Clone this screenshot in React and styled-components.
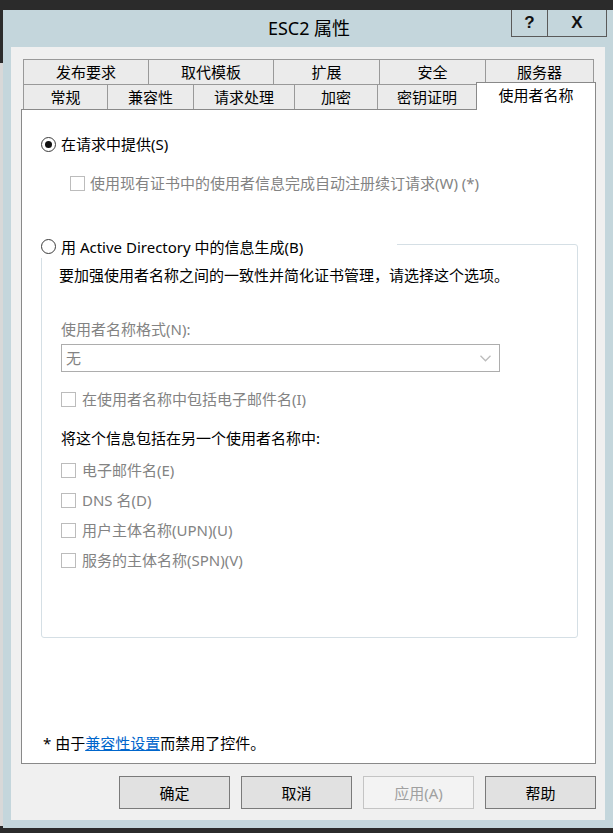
import React from 'react';
import styled, { createGlobalStyle, css } from 'styled-components';

const GlobalStyle = createGlobalStyle`
    html, body {
        margin: 0;
        padding: 0;
        background: #2b2b2b;
    }
    body {
        font-family: "Noto Sans", "Noto Sans CJK SC", sans-serif;
        font-size: 15px;
        color: #000;
    }
`;

const rowTabs = [
    { label: '发布要求', width: 126 },
    { label: '取代模板', width: 126 },
    { label: '扩展', width: 107 },
    { label: '安全', width: 107 },
    { label: '服务器', width: 109 },
];

const frontTabs = [
    { label: '常规', width: 85 },
    { label: '兼容性', width: 87 },
    { label: '请求处理', width: 102 },
    { label: '加密', width: 84 },
    { label: '密钥证明', width: 100 },
    { label: '使用者名称', width: 120, selected: true },
];

const nameChecks = [
    '电子邮件名(E)',
    'DNS 名(D)',
    '用户主体名称(UPN)(U)',
    '服务的主体名称(SPN)(V)',
];

const buttons = [
    { label: '确定' },
    { label: '取消' },
    { label: '应用(A)', disabled: true },
    { label: '帮助' },
];

function Checkbox({ children, gap }) {
    return (
        <Check__Row>
            <Check__Box />
            <Check__Label $gap={gap}>{children}</Check__Label>
        </Check__Row>
    );
}

function Radio({ checked, children }) {
    return (
        <>
            <Radio__Circle $checked={checked} />
            <Radio__Label>{children}</Radio__Label>
        </>
    );
}

export default function App() {
    return (
        <>
            <GlobalStyle />
            <Desktop>
                <Desktop__Edge />
                <Window>
                    <TitleBar>
                        <TitleBar__Text>ESC2 属性</TitleBar__Text>
                        <TitleBar__Buttons>
                            <Caption__Button $width={37}>?</Caption__Button>
                            <Caption__Button $width={60}>X</Caption__Button>
                        </TitleBar__Buttons>
                    </TitleBar>
                    <Client>
                        <Tab__Row>
                            {rowTabs.map((t) => (
                                <Tab key={t.label} $width={t.width}>{t.label}</Tab>
                            ))}
                        </Tab__Row>
                        <Tab__Row>
                            {frontTabs.map((t) => (
                                <Tab key={t.label} $width={t.width} $selected={t.selected}>{t.label}</Tab>
                            ))}
                        </Tab__Row>
                        <Panel>
                            <Option__Row>
                                <Radio checked>在请求中提供(S)</Radio>
                            </Option__Row>
                            <Indent>
                                <Checkbox gap={5}>使用现有证书中的使用者信息完成自动注册续订请求(W) (*)</Checkbox>
                            </Indent>
                            <Group>
                                <Group__Legend>
                                    <Radio>用 Active Directory 中的信息生成(B)</Radio>
                                </Group__Legend>
                                <Group__Text>要加强使用者名称之间的一致性并简化证书管理，请选择这个选项。</Group__Text>
                                <Group__Body>
                                    <Field__Label>使用者名称格式(N):</Field__Label>
                                    <Select>
                                        <span>无</span>
                                        <svg width="11" height="7" viewBox="0 0 11 7">
                                            <polyline points="0.5,0.8 5.5,5.8 10.5,0.8" fill="none" stroke="#bcbcbc" strokeWidth="1.3" />
                                        </svg>
                                    </Select>
                                    <Spaced $top={16}>
                                        <Checkbox>在使用者名称中包括电子邮件名(I)</Checkbox>
                                    </Spaced>
                                    <Section__Label>将这个信息包括在另一个使用者名称中:</Section__Label>
                                    <Check__List>
                                        {nameChecks.map((c) => (
                                            <Checkbox key={c}>{c}</Checkbox>
                                        ))}
                                    </Check__List>
                                </Group__Body>
                            </Group>
                            <Footnote>
                                * 由于<Footnote__Link>兼容性设置</Footnote__Link>而禁用了控件。
                            </Footnote>
                        </Panel>
                        <Button__Row>
                            {buttons.map((b) => (
                                <Dialog__Button key={b.label} $disabled={b.disabled}>{b.label}</Dialog__Button>
                            ))}
                        </Button__Row>
                    </Client>
                </Window>
            </Desktop>
        </>
    );
}

// page
const Desktop = styled.div`
    display: flex;
    width: 613px;
    height: 833px;
    overflow: hidden;
    background: #2b2b2b;
`;

const Desktop__Edge = styled.div`
    width: 3px;
    flex: none;
    background: linear-gradient(to bottom, #2b2b2b 0 63px, #d8d8d8 63px 826px, #2b2b2b 826px);
`;

const Window = styled.div`
    display: flex;
    flex-direction: column;
    width: 610px;
    height: 818px;
    margin-top: 10px;
    background: #c4d6dc;
`;

// title bar
const TitleBar = styled.div`
    display: grid;
    grid-template-columns: 1fr auto 1fr;
    height: 37px;
    flex: none;
`;

const TitleBar__Text = styled.div`
    grid-column: 2;
    font-size: 18px;
    line-height: 37px;
    padding-left: 2px;
    color: #000;
`;

const TitleBar__Buttons = styled.div`
    grid-column: 3;
    justify-self: end;
    display: flex;
    margin-right: 6px;
`;

const Caption__Button = styled.div`
    width: ${(p) => p.$width}px;
    height: 27px;
    box-sizing: border-box;
    border: 1px solid #5a5a5a;
    border-top: none;
    display: flex;
    align-items: center;
    justify-content: center;
    font-family: "Liberation Sans", sans-serif;
    font-weight: bold;
    font-size: 17px;
    color: #111;
    & + & {
        margin-left: -1px;
    }
`;

// client
const Client = styled.div`
    flex: 1;
    display: flex;
    flex-direction: column;
    margin: 0 8px 8px;
    padding: 12px 9px 11px 10px;
    background: #f0f0f0;
`;

const Tab__Row = styled.div`
    display: flex;
    height: 25px;
    margin-left: 2px;
    flex: none;
`;

const Tab = styled.div`
    width: ${(p) => p.$width}px;
    height: 25px;
    box-sizing: border-box;
    border: 1px solid #999;
    border-bottom: none;
    background: #ebebeb;
    display: flex;
    align-items: center;
    justify-content: center;
    line-height: 20px;
    & + & {
        margin-left: -1px;
    }
    ${(p) => p.$selected && css`
        position: relative;
        z-index: 1;
        height: 28px;
        margin-top: -2px;
        background: #fff;
        border-color: #898989;
        padding-bottom: 3px;
    `}
`;

const Panel = styled.div`
    flex: 1;
    display: flex;
    flex-direction: column;
    background: #fff;
    border: 1px solid #898989;
    padding: 0 17px 10px 19px;
`;

const Option__Row = styled.div`
    display: flex;
    align-items: center;
    height: 22px;
    margin-top: 23px;
`;

const Radio__Circle = styled.span`
    position: relative;
    width: 15px;
    height: 15px;
    box-sizing: border-box;
    border: 1px solid #3c3c3c;
    border-radius: 50%;
    background: #fff;
    flex: none;
    ${(p) => p.$checked && css`
        &::after {
            content: '';
            position: absolute;
            left: 3px;
            top: 3px;
            width: 7px;
            height: 7px;
            border-radius: 50%;
            background: #111;
        }
    `}
`;

const Radio__Label = styled.span`
    margin-left: 5px;
    line-height: 20px;
    white-space: nowrap;
`;

const Indent = styled.div`
    margin-top: 17px;
    margin-left: 29px;
`;

const Check__Row = styled.div`
    display: flex;
    align-items: center;
    height: 22px;
`;

const Check__Box = styled.span`
    width: 15px;
    height: 15px;
    box-sizing: border-box;
    border: 1px solid #bcbcbc;
    background: #fff;
    flex: none;
`;

const Check__Label = styled.span`
    margin-left: ${(p) => p.$gap || 6}px;
    color: #838383;
    line-height: 20px;
    white-space: nowrap;
`;

// group box
const Group = styled.div`
    width: 537px;
    height: 394px;
    box-sizing: border-box;
    margin-top: 50px;
    border: 1px solid #d5dfe5;
    border-radius: 3px;
    padding-left: 17px;
`;

const Group__Legend = styled.div`
    display: flex;
    align-items: center;
    width: 356px;
    height: 23px;
    margin: -10px 0 0 -18px;
    background: #fff;
`;

const Group__Text = styled.div`
    margin-top: 7px;
    line-height: 20px;
    white-space: nowrap;
`;

const Group__Body = styled.div`
    padding-left: 2px;
`;

const Field__Label = styled.div`
    margin-top: 34px;
    line-height: 20px;
    color: #838383;
`;

const Select = styled.div`
    display: flex;
    align-items: center;
    justify-content: space-between;
    width: 439px;
    height: 28px;
    box-sizing: border-box;
    margin-top: 5px;
    padding: 0 8px 0 4px;
    border: 1px solid #adadad;
    background: #fff;
    color: #838383;
    line-height: 20px;
`;

const Spaced = styled.div`
    margin-top: ${(p) => p.$top}px;
`;

const Section__Label = styled.div`
    margin-top: 18px;
    line-height: 20px;
`;

const Check__List = styled.div`
    display: flex;
    flex-direction: column;
    gap: 8px;
    margin-top: 11px;
`;

const Footnote = styled.div`
    margin-top: auto;
    margin-left: 2px;
    line-height: 20px;
`;

const Footnote__Link = styled.span`
    color: #0066cc;
    text-decoration: underline;
`;

// buttons
const Button__Row = styled.div`
    display: flex;
    justify-content: flex-end;
    gap: 11px;
    margin-top: 12px;
    flex: none;
`;

const Dialog__Button = styled.div`
    width: 111px;
    height: 33px;
    box-sizing: border-box;
    display: flex;
    align-items: center;
    justify-content: center;
    border: 1px solid #7a7a7a;
    background: #e1e1e1;
    ${(p) => p.$disabled && css`
        border-color: #c4c4c4;
        background: #f3f3f3;
        color: #a0a0a0;
    `}
`;
